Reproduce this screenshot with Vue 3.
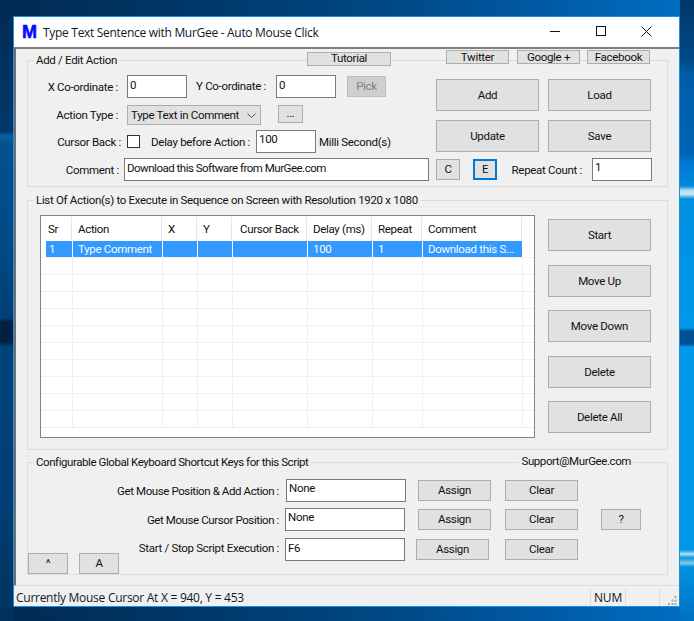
<script setup>
const columns = [
  { label: 'Sr', width: 31 },
  { label: 'Action', width: 90 },
  { label: 'X', width: 35 },
  { label: 'Y', width: 35 },
  { label: 'Cursor Back', width: 75 },
  { label: 'Delay (ms)', width: 65 },
  { label: 'Repeat', width: 50 },
  { label: 'Comment', width: 100 },
]
const selected = ['1', 'Type Comment', '', '', '', '100', '1', 'Download this S...']
const emptyRows = 10
const sideButtons = ['Start', 'Move Up', 'Move Down', 'Delete', 'Delete All']
</script>

<template>
  <div class="desktop">
    <div class="window">
      <header class="titlebar">
        <span class="logo">M</span>
        <span class="title">Type Text Sentence with MurGee - Auto Mouse Click</span>
        <svg class="caption" width="112" height="14" viewBox="0 0 112 14">
          <path d="M0 6.5H10" stroke="#111" fill="none" />
          <rect x="46.5" y="1.5" width="9" height="9" stroke="#111" fill="none" />
          <path d="M91.5 1.5L101.5 11.5M101.5 1.5L91.5 11.5" stroke="#111" fill="none" />
        </svg>
      </header>

      <main class="client">
        <section class="group g1">
          <span class="legend l1">Add / Edit Action</span>
          <button class="btn tutorial">Tutorial</button>
          <button class="btn social twitter">Twitter</button>
          <button class="btn social google">Google +</button>
          <button class="btn social facebook">Facebook</button>

          <div class="g1-top">
            <div class="g1-left">
              <div class="row r1">
                <span class="lbl w90">X Co-ordinate :</span>
                <div class="field w60 ml9">0</div>
                <span class="lbl w70 ml9 up">Y Co-ordinate :</span>
                <div class="field w60 ml10">0</div>
                <button class="btn pick">Pick</button>
              </div>
              <div class="row r2">
                <span class="lbl w90">Action Type :</span>
                <div class="select ml9">
                  <span>Type Text in Comment</span>
                  <svg width="9" height="5" viewBox="0 0 9 5"><path d="M.5.5L4.5 4.5L8.5.5" fill="none" stroke="#555" /></svg>
                </div>
                <button class="btn dots">...</button>
              </div>
              <div class="row r3">
                <span class="lbl w93">Cursor Back :</span>
                <span class="check"></span>
                <span class="lbl delay">Delay before Action :</span>
                <div class="field w60 ml6 raised">100</div>
                <span class="lbl ml3">Milli Second(s)</span>
              </div>
            </div>
            <div class="g1-actions">
              <button class="btn">Add</button>
              <button class="btn">Load</button>
              <button class="btn">Update</button>
              <button class="btn">Save</button>
            </div>
          </div>

          <div class="row r4">
            <span class="lbl w91">Comment :</span>
            <div class="field comment">Download this Software from MurGee.com</div>
            <button class="btn small ml7">C</button>
            <button class="btn small focused">E</button>
            <span class="lbl repeat">Repeat Count :</span>
            <div class="field w60 ml10 raised">1</div>
          </div>
        </section>

        <section class="group g2">
          <span class="legend l1">List Of Action(s) to Execute in Sequence on Screen with Resolution 1920 x 1080</span>
          <div class="list">
            <div class="list-head">
              <span v-for="c in columns" :key="c.label" class="hcell" :style="{ width: c.width + 'px' }">{{ c.label }}</span>
            </div>
            <div class="list-row selected">
              <span
                v-for="(v, i) in selected"
                :key="i"
                class="cell"
                :style="{ width: columns[i].width + 'px' }"
              >{{ v }}</span>
            </div>
            <div v-for="n in emptyRows" :key="n" class="list-row">
              <span v-for="c in columns" :key="c.label" class="cell" :style="{ width: c.width + 'px' }"></span>
            </div>
          </div>
          <div class="side">
            <button v-for="b in sideButtons" :key="b" class="btn">{{ b }}</button>
          </div>
        </section>

        <section class="group g3">
          <span class="legend l1 tight">Configurable Global Keyboard Shortcut Keys for this Script</span>
          <span class="legend support">Support@MurGee.com</span>
          <div class="row k1">
            <span class="lbl w251 snug">Get Mouse Position &amp; Add Action :</span>
            <div class="field key ml7 raised">None</div>
            <button class="btn assign ml12">Assign</button>
            <button class="btn assign ml14">Clear</button>
          </div>
          <div class="row k2">
            <span class="lbl w251 snug">Get Mouse Cursor Position :</span>
            <div class="field key ml6 raised">None</div>
            <button class="btn assign ml13">Assign</button>
            <button class="btn assign ml14">Clear</button>
            <button class="btn help">?</button>
          </div>
          <div class="row k3">
            <span class="lbl w251 lift">Start / Stop Script Execution :</span>
            <div class="field key ml6">F6</div>
            <button class="btn assign ml11">Assign</button>
            <button class="btn assign ml16">Clear</button>
          </div>
          <div class="corner">
            <button class="btn">^</button>
            <button class="btn">A</button>
          </div>
        </section>
      </main>

      <footer class="status">
        <span class="status-text">Currently Mouse Cursor At X = 940, Y = 453</span>
        <span class="pane num">NUM</span>
        <span class="pane blank"></span>
        <svg class="grip" width="9" height="9" viewBox="0 0 9 9" fill="#a8a8a8">
          <rect x="6.5" y="0" width="2" height="2" />
          <rect x="3.5" y="3.5" width="2" height="2" />
          <rect x="6.5" y="3.5" width="2" height="2" />
          <rect x="0" y="7" width="2" height="2" />
          <rect x="3.5" y="7" width="2" height="2" />
          <rect x="6.5" y="7" width="2" height="2" />
        </svg>
      </footer>
    </div>
  </div>
</template>

<style scoped>
* { box-sizing: border-box; }
.desktop {
  width: 694px;
  height: 621px;
  overflow: hidden;
  padding: 16px 0 0 13px;
  background:
    linear-gradient(180deg,
      #012a50 0, #013160 60px, #01386a 132px, #0a5aa0 135px, #0a5aa0 139px, #01508e 144px,
      #004a85 250px, #003f74 318px, #001f42 322px, #001f42 342px, #00427a 347px,
      #003f74 500px, #00325e 621px) left top / 13px 621px no-repeat,
    linear-gradient(180deg,
      #01386a 0, #014a86 60px, #005ca8 75px, #0064b4 155px, #0078d0 162px, #0088dc 186px,
      #a8d8ee 190px, #cfe8f2 194px, #0090e0 199px, #0098e8 328px, #054f95 331px, #054f95 344px,
      #0098e8 347px, #0098e6 550px, #b8e0f0 554px, #0098e6 558px, #88cce8 563px, #0092de 567px,
      #0070c4 621px) right top / 14px 621px no-repeat,
    linear-gradient(90deg, #012a52 0, #00386a 200px, #004a86 400px, #005ca8 560px, #0070c4 694px);
}
.window {
  width: 667px;
  height: 591px;
  display: flex;
  flex-direction: column;
  border: 1px solid #1a8fe6;
  background: #f0f0f0;
  font: 11.5px Roboto, "Liberation Sans", Arial, sans-serif;
  letter-spacing: -.31px;
  color: #111;
}
.titlebar {
  height: 30px;
  flex: none;
  background: #fff;
  display: flex;
  align-items: center;
  padding-left: 8px;
}
.logo {
  font: 900 18px "Liberation Sans", Arial, sans-serif;
  letter-spacing: 0;
  color: #0a0aff;
  -webkit-text-stroke: .6px #0a0aff;
  width: 21px;
  line-height: 18px;
}
.title {
  font: 12px "Open Sans", sans-serif;
  color: #101828;
  letter-spacing: -.3px;
}
.caption { margin-left: auto; margin-right: 17px; }

.client {
  flex: none;
  height: 539px;
  border-top: 2px solid #808080;
  border-left: 2px solid #707070;
  border-bottom: 1px solid #dcdcdc;
  padding: 11px 12px 0 11px;
  display: flex;
  flex-direction: column;
}
.group {
  position: relative;
  border: 1px solid #dcdcdc;
  width: 641px;
  flex: none;
}
.g1 { height: 127px; }
.g2 { height: 250px; margin-top: 13px; display: flex; align-items: flex-start; }
.g3 { height: 113px; margin-top: 12px; padding-top: 16px; }

.legend {
  position: absolute;
  top: -8px;
  background: #f0f0f0;
  padding: 0 2px;
  line-height: 15px;
  white-space: nowrap;
}
.l1 { left: 6px; }
.tight { letter-spacing: -.43px; }
.support { right: 34px; top: -9px; letter-spacing: -.41px; }

.btn {
  background: #e1e1e1;
  border: 1px solid #adadad;
  padding: 0;
  font: inherit;
  letter-spacing: inherit;
  color: #111;
  line-height: 1;
}
.tutorial { position: absolute; left: 279px; top: -9px; width: 84px; height: 14px; }
.social { position: absolute; top: -11px; width: 63px; height: 14px; padding-top: 1px; }
.twitter { left: 418px; }
.google { left: 489px; }
.facebook { left: 559px; }

.g1-top { display: flex; }
.g1-left { width: 408px; padding-top: 14px; }
.g1-actions {
  margin-top: 18px;
  display: grid;
  grid-template-columns: 103px 103px;
  grid-auto-rows: 32px;
  gap: 9px;
}
.g1-actions .btn { padding-top: 2px; }
.row { display: flex; align-items: center; white-space: nowrap; }
.r1 { height: 23px; }
.r2 { height: 20px; margin-top: 7px; }
.r3 { height: 23px; margin-top: 5px; }
.r4 { height: 23px; margin-top: 5px; }
.lbl { flex: none; text-align: right; }
.up { position: relative; top: -1px; }
.lift { position: relative; top: -2px; }
.snug { letter-spacing: -.4px; }
.w90 { width: 90px; }
.w91 { width: 91px; }
.w93 { width: 93px; }
.w70 { width: 70px; }
.w60 { width: 60px; }
.w251 { width: 251px; }
.ml3 { margin-left: 3px; }
.ml6 { margin-left: 6px; }
.ml7 { margin-left: 7px; }
.ml9 { margin-left: 9px; }
.ml10 { margin-left: 10px; }
.ml11 { margin-left: 11px; }
.ml12 { margin-left: 12px; }
.ml13 { margin-left: 13px; }
.ml14 { margin-left: 14px; }
.ml16 { margin-left: 16px; }

.field {
  flex: none;
  height: 23px;
  background: #fff;
  border: 1px solid #7a7a7a;
  padding: 2px 0 0 2px;
  line-height: 15px;
}
.raised { padding-top: 1px; }
.pick {
  margin-left: 11px;
  width: 39px;
  height: 21px;
  background: #cfcfcf;
  border-color: #bdbdbd;
  color: #808080;
}
.select {
  width: 134px;
  height: 20px;
  background: #e1e1e1;
  border: 1px solid #adadad;
  display: flex;
  align-items: center;
  justify-content: space-between;
  padding: 0 4px 0 3px;
}
.dots { margin-left: 17px; width: 25px; height: 18px; margin-top: -2px; }
.check {
  flex: none;
  margin-left: 6px;
  width: 13px;
  height: 13px;
  background: #fff;
  border: 1px solid #333;
}
.delay { margin-left: 11px; width: 99px; }
.comment { width: 305px; margin-left: 5px; letter-spacing: -.5px; }
.small { width: 24px; height: 21px; }
.focused { margin-left: 13px; border: 2px solid #0078d7; }
.repeat { margin-left: 14px; width: 71px; }

.list {
  margin: 14px 0 0 12px;
  width: 495px;
  height: 223px;
  flex: none;
  background: #fff;
  border: 1px solid #82828c;
  overflow: hidden;
}
.list-head { display: flex; height: 25px; padding-top: 1px; }
.hcell {
  flex: none;
  border-right: 1px solid #e5e5e5;
  padding-left: 6px;
  line-height: 24px;
  white-space: nowrap;
}
.hcell:first-child { padding-left: 7px; }
.hcell:nth-child(5) { padding-left: 8px; }
.list-row {
  display: flex;
  height: 17px;
  padding-left: 1px;
  border-bottom: 1px solid #f0f0f0;
}
.cell {
  flex: none;
  border-right: 1px solid #f0f0f0;
  padding: 1px 0 0 5px;
  line-height: 15px;
  white-space: nowrap;
  overflow: hidden;
}
.selected .cell {
  background: #3399ff;
  color: #f4f9ff;
  border-right-color: #fff;
}
.selected .cell:first-child {
  margin-left: 4px;
  width: 27px !important;
  padding-left: 3px;
}
.side {
  margin: 18px 0 0 13px;
  width: 103px;
  display: flex;
  flex-direction: column;
  gap: 13.5px;
}
.side .btn { height: 32px; padding-top: 2px; }

.k1, .k2, .k3 { height: 23px; }
.k2 { margin-top: 6px; }
.k3 { margin-top: 7px; }
.key { width: 120px; }
.assign { width: 73px; height: 21px; }
.help { margin-left: 23px; width: 40px; height: 21px; }
.corner {
  position: absolute;
  left: 0;
  bottom: 0;
  display: flex;
  gap: 11px;
}
.corner .btn { width: 40px; height: 21px; }

.status {
  flex: none;
  height: 20px;
  padding: 2px 0 0 2px;
  position: relative;
  display: flex;
  align-items: center;
  font: 12px "Open Sans", sans-serif;
  color: #101828;
}
.status-text { width: 574px; letter-spacing: -.27px; }
.pane {
  height: 17px;
  border-left: 1px solid #dcdcdc;
  line-height: 17px;
  letter-spacing: -.2px;
}
.num { width: 35px; text-align: center; }
.blank { width: 35px; border-right: 1px solid #dcdcdc; }
.grip { position: absolute; right: 2px; bottom: 1px; }
</style>
